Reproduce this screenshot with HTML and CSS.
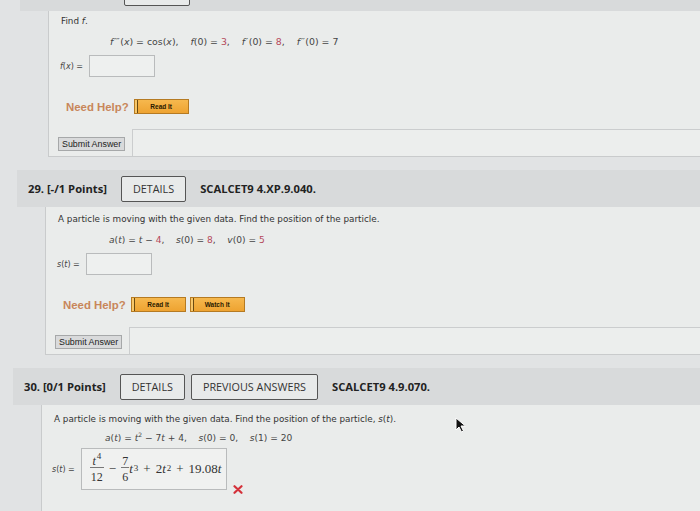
FILE: index.html
```html
<!DOCTYPE html>
<html>
<head>
<meta charset="utf-8">
<link rel="stylesheet" href="styles.css">
</head>
<body>
<div class="page">
  <section class="q q28">
    <div class="qhead">
      <span class="qbtn ghost"></span>
    </div>
    <div class="qbody">
      <p class="prompt">Find <i>f</i>.</p>
      <p class="eq"><i>f</i><span class="pr">&#8242;&#8242;&#8242;</span>(<i>x</i>) = cos(<i>x</i>),&nbsp;&nbsp;&nbsp; <i>f</i>(0) = <span class="rv">3</span>,&nbsp;&nbsp;&nbsp; <i>f</i><span class="pr">&#8242;</span>(0) = <span class="rv">8</span>,&nbsp;&nbsp;&nbsp; <i>f</i><span class="pr">&#8242;&#8242;</span>(0) = 7</p>
      <div class="ans"><span class="lbl"><i>f</i>(<i>x</i>) =</span><span class="box"></span></div>
      <div class="help"><span class="nh">Need Help?</span><span class="hbtn">Read It</span></div>
      <div class="subrow"><span class="submit">Submit Answer</span><div class="notes"></div></div>
    </div>
  </section>

  <section class="q q29">
    <div class="qhead">
      <span class="qnum">29. [-/1 Points]</span>
      <span class="btns"><span class="qbtn">DETAILS</span></span>
      <span class="qid">SCALCET9 4.XP.9.040.</span>
    </div>
    <div class="qbody">
      <p class="prompt">A particle is moving with the given data. Find the position of the particle.</p>
      <p class="eq"><i>a</i>(<i>t</i>) = <i>t</i> &minus; <span class="rv">4</span>,&nbsp;&nbsp;&nbsp; <i>s</i>(0) = <span class="rv">8</span>,&nbsp;&nbsp;&nbsp; <i>v</i>(0) = <span class="rv">5</span></p>
      <div class="ans"><span class="lbl"><i>s</i>(<i>t</i>) =</span><span class="box"></span></div>
      <div class="help"><span class="nh">Need Help?</span><span class="hbtn">Read It</span><span class="hbtn">Watch It</span></div>
      <div class="subrow"><span class="submit">Submit Answer</span><div class="notes"></div></div>
    </div>
  </section>

  <section class="q q30">
    <div class="qhead">
      <span class="qnum">30. [0/1 Points]</span>
      <span class="btns"><span class="qbtn">DETAILS</span><span class="qbtn">PREVIOUS ANSWERS</span></span>
      <span class="qid">SCALCET9 4.9.070.</span>
    </div>
    <div class="qbody">
      <p class="prompt">A particle is moving with the given data. Find the position of the particle, <i>s</i>(<i>t</i>).</p>
      <p class="eq"><i>a</i>(<i>t</i>) = <i>t</i><sup>2</sup> &minus; 7<i>t</i> + 4,&nbsp;&nbsp;&nbsp; <i>s</i>(0) = 0,&nbsp;&nbsp;&nbsp; <i>s</i>(1) = 20</p>
      <div class="ans ans-big">
        <span class="lbl"><i>s</i>(<i>t</i>) =</span>
        <span class="mbox">
          <span class="frac"><span class="num"><i>t</i><sup>4</sup></span><span class="den">12</span></span>
          <span class="op">&minus;</span>
          <span class="frac"><span class="num">7</span><span class="den">6</span></span><i>t</i><sup>3</sup>
          <span class="op">+</span>2<i>t</i><sup>2</sup>
          <span class="op">+</span>19.08<i>t</i>
        </span>
        <svg class="wrong" width="10" height="9" viewBox="0 0 10 9"><path d="M1.5 1.2 L8.5 7.8 M8.5 1.2 L1.5 7.8" stroke="#d4313a" stroke-width="2.2" stroke-linecap="round"/></svg>
      </div>
    </div>
  </section>
</div>
<svg class="cursor" width="12" height="16" viewBox="0 0 12 16"><path d="M1 1 L1 13 L4 10 L6.5 15 L8.5 14 L6 9 L10.5 9 Z" fill="#111" stroke="#fff" stroke-width="1"/></svg>
</body>
</html>
```

FILE: styles.css
```css
html, body {
  margin: 0;
  padding: 0;
}
body {
  width: 700px;
  height: 511px;
  overflow: hidden;
  background: #e1e3e4;
  font-family: "DejaVu Sans", Verdana, sans-serif;
  color: #333;
  position: relative;
}
.page {
  display: flex;
  flex-direction: column;
  gap: 13px;
}
.q28 { margin-left: 20px; margin-top: -26px; }
.q29 { margin-left: 17px; }
.q30 { margin-left: 13px; }

.qhead {
  height: 37px;
  background: #d8dadb;
  display: flex;
  align-items: center;
  gap: 14px;
  padding-left: 11px;
  font-family: "Open Sans", sans-serif;
  color: #222;
  box-sizing: border-box;
}
.q28 .qhead { padding-left: 104px; }
.qnum, .qid {
  font-weight: 700;
  font-size: 11.2px;
}
.btns {
  display: flex;
  gap: 6px;
}
.qbtn {
  display: inline-flex;
  align-items: center;
  height: 26px;
  box-sizing: border-box;
  padding: 0 11px;
  border: 1.5px solid #555;
  border-radius: 2px;
  background: #e8eaea;
  font-size: 10.8px;
  color: #333;
}
.ghost { width: 66px; }

.qbody {
  margin-left: 28px;
  background: #eaeceb;
  border-left: 1px solid #c9cbcc;
  border-bottom: 1px solid #c9cbcc;
  padding: 6px 0 0 0;
}
.q28 .qbody { padding-top: 4px; }
.q30 .qbody { border-bottom: none; height: 140px; padding-top: 8px; }

.prompt {
  margin: 0 0 0 12px;
  font-size: 8.8px;
  line-height: 12px;
  color: #333;
}
.eq {
  margin: 9px 0 0 63px;
  font-size: 9.1px;
  line-height: 12px;
  color: #444;
}
.q28 .eq { margin-left: 61px; font-size: 9.4px; }
.q30 .eq { margin-top: 7px; }
.pr { letter-spacing: -0.5px; margin-left: 1px; margin-right: 1px; }
.rv { color: #b5485a; }
.eq sup, .prompt sup { font-size: 6px; line-height: 0; }

.ans {
  display: flex;
  align-items: center;
  margin: 7px 0 0 11px;
  gap: 6px;
  font-size: 8px;
  color: #444;
}
.box {
  width: 66px;
  height: 22px;
  box-sizing: border-box;
  border: 1px solid #b9bbbc;
  background: #eef0ef;
}
.help {
  display: flex;
  align-items: center;
  margin: 22px 0 0 17px;
  gap: 4px;
}
.nh {
  font-family: "Liberation Sans", Arial, sans-serif;
  font-weight: 700;
  font-size: 11.4px;
  color: #c8865a;
  margin-right: 1px;
}
.hbtn {
  display: inline-flex;
  align-items: center;
  justify-content: center;
  width: 55px;
  height: 15px;
  box-sizing: border-box;
  background: linear-gradient(#f6b84e, #eea331);
  border: 1px solid #b57a22;
  box-shadow: inset 2px 0 0 #f7c76a, inset 3px 0 0 #6a4a10;
  font-family: "Liberation Sans", Arial, sans-serif;
  font-weight: 700;
  font-size: 6.5px;
  color: #2a1a00;
}
.subrow {
  display: flex;
  align-items: flex-end;
  margin-top: 16px;
  height: 26px;
}
.submit {
  margin: 0 7px 5px 9px;
  height: 14px;
  box-sizing: border-box;
  padding: 0 3px;
  display: inline-flex;
  align-items: center;
  background: #d9dadb;
  border: 1px solid #a6a8a9;
  font-family: "Liberation Sans", Arial, sans-serif;
  font-size: 8.9px;
  color: #222;
}
.notes {
  flex: 1;
  height: 26px;
  border-top: 1px solid #cbcdce;
  border-left: 1px solid #cbcdce;
  background: #eceeed;
}

.ans-big {
  margin-top: 4px;
  margin-left: 10px;
  align-items: center;
}
.mbox {
  display: inline-flex;
  align-items: center;
  height: 42px;
  width: 146px;
  box-sizing: border-box;
  padding: 0 4px 0 8px;
  border: 1px solid #b9bbbc;
  background: #f0f1f0;
  font-family: "Liberation Serif", "Times New Roman", serif;
  font-size: 13px;
  color: #333;
  white-space: nowrap;
}
.mbox sup { font-size: 9px; line-height: 0; position: relative; top: -1px; margin-left: 1px; }
.frac {
  display: inline-flex;
  flex-direction: column;
  align-items: center;
  font-size: 12px;
  line-height: 12px;
}
.frac .num { padding: 0 1px; }
.frac .den { border-top: 0.6px solid #777; padding: 3px 1px 0; }
.op { margin: 0 5px; }
.wrong {
  align-self: flex-end;
  margin: 0 0 -4px 0;
}
.cursor {
  position: absolute;
  left: 455px;
  top: 417px;
}
```
